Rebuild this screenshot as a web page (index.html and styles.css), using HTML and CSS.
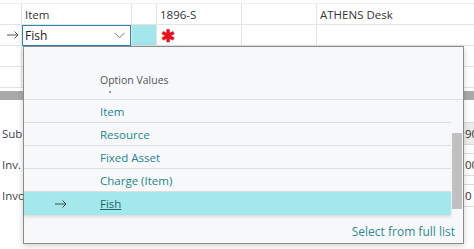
FILE: index.html
```html
<!DOCTYPE html>
<html>
<head>
    <title>Sales Lines</title>
    <link rel="stylesheet" href="styles.css">
</head>
<body>
    <div class="linhas">
        <div class="celula"></div>
        <div class="celula texto">Item</div>
        <div class="celula"></div>
        <div class="celula texto">1896-S</div>
        <div class="celula"></div>
        <div class="celula texto">ATHENS Desk</div>

        <div class="celula seta">
            <svg width="12" height="8" viewBox="0 0 12 8"><path d="M0 4 H11 M7.5 0.5 L11 4 L7.5 7.5" fill="none" stroke="#555" stroke-width="1"/></svg>
        </div>
        <div class="celula">
            <div class="campo">
                <span>Fish</span>
                <svg width="11" height="7" viewBox="0 0 11 7"><path d="M0.5 0.8 L5.5 5.8 L10.5 0.8" fill="none" stroke="#777" stroke-width="1"/></svg>
            </div>
        </div>
        <div class="celula ciano"></div>
        <div class="celula obrigatorio">&#10033;</div>
        <div class="celula"></div>
        <div class="celula"></div>

        <div class="celula"></div>
        <div class="celula"></div>
        <div class="celula"></div>
        <div class="celula"></div>
        <div class="celula"></div>
        <div class="celula"></div>

        <div class="celula"></div>
        <div class="celula"></div>
        <div class="celula"></div>
        <div class="celula"></div>
        <div class="celula"></div>
        <div class="celula"></div>
    </div>
    <div class="barraRolagem"></div>

    <div class="totais">
        <div class="rotulo">Subtotal Excl. VAT (USD)</div>
        <div class="valor leitura">90</div>
        <div class="rotulo">Inv. Discount Amount Excl. VAT (USD)</div>
        <div class="valor">00</div>
        <div class="rotulo">Invoice Discount %</div>
        <div class="valor">0</div>
    </div>

    <div id="lista" class="lista">
        <div class="cabecalho">
            <span>Option Values</span>
            <span class="ponto"></span>
        </div>
        <div class="corpo">
            <div class="opcoes">
                <div class="opcao"><span class="marca"></span>Item</div>
                <div class="opcao"><span class="marca"></span>Resource</div>
                <div class="opcao"><span class="marca"></span>Fixed Asset</div>
                <div class="opcao"><span class="marca"></span>Charge (Item)</div>
                <div class="opcao atual">
                    <span class="marca"><svg width="12" height="8" viewBox="0 0 12 8"><path d="M0 4 H11 M7.5 0.5 L11 4 L7.5 7.5" fill="none" stroke="#444" stroke-width="1"/></svg></span>
                    <u>Fish</u>
                </div>
            </div>
            <div class="rolagem">
                <svg width="7" height="4" viewBox="0 0 7 4"><path d="M0 4 L3.5 0 L7 4 Z" fill="#333"/></svg>
                <div class="trilho"><div class="polegar"></div></div>
                <svg width="7" height="4" viewBox="0 0 7 4"><path d="M0 0 L3.5 4 L7 0 Z" fill="#bbb"/></svg>
            </div>
        </div>
        <div class="rodape">Select from full list</div>
    </div>
</body>
</html>
```

FILE: styles.css
```css
body {
    font-family: "Open Sans", Arial, sans-serif;
    font-size: 11.5px;
    color: #333;
    background-color: #fff;
    margin: 0;
    width: 474px;
    height: 249px;
    overflow: hidden;
    position: relative;
}
.linhas {
    display: grid;
    grid-template-columns: 22px 110px 25px 85px 75px 1fr;
    grid-auto-rows: 21px;
    margin-top: 3px;
    border-top: 1px solid #ececec;
}
.celula {
    border-bottom: 1px solid #e3e3e3;
    border-right: 1px solid #e3e3e3;
    display: flex;
    align-items: center;
    padding-left: 3px;
    min-width: 0;
}
.celula:nth-child(6n) {
    border-right: none;
}
.seta {
    padding-left: 7px;
}
.campo {
    flex: 1;
    height: 19px;
    margin-left: -3px;
    border: 1px solid #2b86b4;
    display: flex;
    align-items: center;
    justify-content: space-between;
    padding: 0 5px 0 2px;
    font-size: 12px;
    color: #222;
}
.ciano {
    background-color: #a3e7eb;
}
.obrigatorio {
    color: #e8101a;
    font-size: 17px;
    font-weight: bold;
    padding-left: 4px;
}
.barraRolagem {
    height: 9px;
    margin-top: 3px;
    background-color: #a9a9a9;
}
.totais {
    display: grid;
    grid-template-columns: 463px 90px;
    grid-auto-rows: 31px;
    margin-top: 18px;
    align-items: center;
}
.rotulo {
    padding-left: 2px;
    white-space: nowrap;
    overflow: hidden;
    color: #444;
}
.valor {
    height: 21px;
    line-height: 21px;
    padding-left: 2px;
    border-top: 1px solid #dcdcdc;
    border-bottom: 1px solid #dcdcdc;
    color: #333;
}
.leitura {
    background-color: #ececec;
}

/* lista suspensa por cima da grade */
.lista {
    position: absolute;
    left: 23px;
    top: 46px;
    width: 439px;
    height: 196px;
    border: 1px solid #8c8c8c;
    background-color: #f7f8fa;
    box-shadow: 0 2px 6px rgba(0, 0, 0, 0.18);
    display: flex;
    flex-direction: column;
}
.cabecalho {
    height: 53px;
    border-bottom: 1px solid #dedede;
    display: flex;
    flex-direction: column;
    align-items: flex-start;
    justify-content: flex-end;
    padding-left: 76px;
    padding-bottom: 6px;
    box-sizing: border-box;
    color: #555;
    font-size: 10.5px;
}
.ponto {
    width: 2px;
    height: 2px;
    background-color: #777;
    border-radius: 1px;
    margin: 4px 0 0 9px;
}
.corpo {
    display: flex;
    height: 116px;
}
.opcoes {
    flex: 1;
}
.opcao {
    height: 22px;
    border-bottom: 1px solid #dedede;
    display: flex;
    align-items: center;
    color: #22868b;
}
.marca {
    width: 76px;
    padding-left: 31px;
    box-sizing: border-box;
    display: flex;
    align-items: center;
}
.atual {
    background-color: #a3e9ec;
    border-bottom: none;
    height: 23px;
    box-shadow: 0 2px 3px rgba(0, 0, 0, 0.12);
}
.atual u {
    color: #23666a;
}
.rolagem {
    width: 12px;
    display: flex;
    flex-direction: column;
    align-items: center;
    padding: 1px 0 0 0;
    gap: 3px;
}
.trilho {
    flex: 1;
    width: 10px;
    padding-top: 28px;
    padding-bottom: 4px;
    box-sizing: border-box;
}
.polegar {
    height: 76px;
    background-color: #c1c1c1;
}
.rodape {
    flex: 1;
    display: flex;
    align-items: center;
    justify-content: flex-end;
    padding-right: 8px;
    padding-top: 4px;
    color: #2e8b90;
    font-size: 12px;
}
```
